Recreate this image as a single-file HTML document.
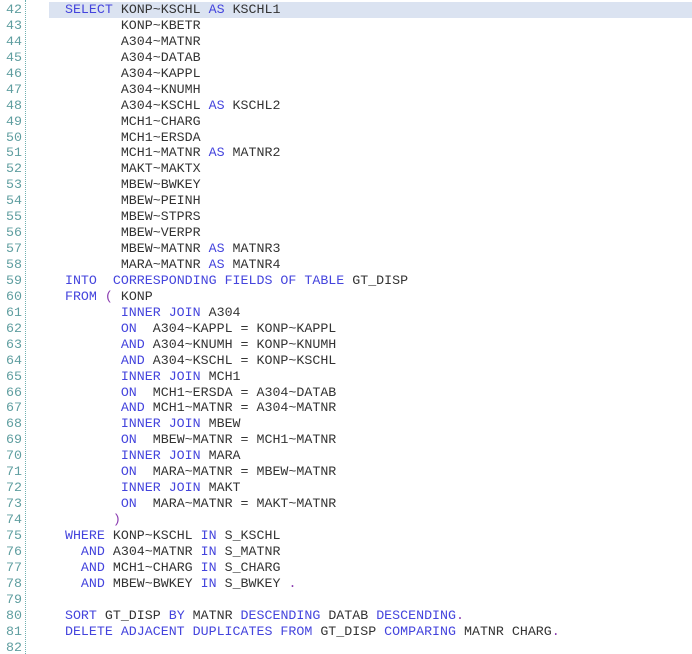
<!DOCTYPE html>
<html><head><meta charset="utf-8"><style>
html,body{margin:0;padding:0;background:#fff;width:692px;height:654px;overflow:hidden}
.wrap{position:relative;padding-top:2px}
.l{position:relative;height:15.95px;line-height:15.95px;font-family:"Liberation Mono",monospace;font-size:13.3px;white-space:pre;color:#333}
.n{position:absolute;left:6px;width:18px;color:#5f9ea0;}
.c{position:absolute;left:49px;}
.hl{position:absolute;left:49px;right:0;top:0;height:16px;background:#dbe3f1}
.k{color:#4444dd}
.p{color:#8a3bb0}
.g{position:absolute;left:25px;top:0;height:654px;border-left:1px dotted #6fb0b0}
</style></head><body><div class="g"></div><div class="wrap">
<div class="l"><div class="hl"></div><span class="n">42</span><span class="c">  <span class="k">SELECT</span> KONP~KSCHL <span class="k">AS</span> KSCHL1</span></div>
<div class="l"><span class="n">43</span><span class="c">         KONP~KBETR</span></div>
<div class="l"><span class="n">44</span><span class="c">         A304~MATNR</span></div>
<div class="l"><span class="n">45</span><span class="c">         A304~DATAB</span></div>
<div class="l"><span class="n">46</span><span class="c">         A304~KAPPL</span></div>
<div class="l"><span class="n">47</span><span class="c">         A304~KNUMH</span></div>
<div class="l"><span class="n">48</span><span class="c">         A304~KSCHL <span class="k">AS</span> KSCHL2</span></div>
<div class="l"><span class="n">49</span><span class="c">         MCH1~CHARG</span></div>
<div class="l"><span class="n">50</span><span class="c">         MCH1~ERSDA</span></div>
<div class="l"><span class="n">51</span><span class="c">         MCH1~MATNR <span class="k">AS</span> MATNR2</span></div>
<div class="l"><span class="n">52</span><span class="c">         MAKT~MAKTX</span></div>
<div class="l"><span class="n">53</span><span class="c">         MBEW~BWKEY</span></div>
<div class="l"><span class="n">54</span><span class="c">         MBEW~PEINH</span></div>
<div class="l"><span class="n">55</span><span class="c">         MBEW~STPRS</span></div>
<div class="l"><span class="n">56</span><span class="c">         MBEW~VERPR</span></div>
<div class="l"><span class="n">57</span><span class="c">         MBEW~MATNR <span class="k">AS</span> MATNR3</span></div>
<div class="l"><span class="n">58</span><span class="c">         MARA~MATNR <span class="k">AS</span> MATNR4</span></div>
<div class="l"><span class="n">59</span><span class="c">  <span class="k">INTO</span>  <span class="k">CORRESPONDING FIELDS OF TABLE</span> GT_DISP</span></div>
<div class="l"><span class="n">60</span><span class="c">  <span class="k">FROM</span> <span class="p">(</span> KONP</span></div>
<div class="l"><span class="n">61</span><span class="c">         <span class="k">INNER JOIN</span> A304</span></div>
<div class="l"><span class="n">62</span><span class="c">         <span class="k">ON</span>  A304~KAPPL = KONP~KAPPL</span></div>
<div class="l"><span class="n">63</span><span class="c">         <span class="k">AND</span> A304~KNUMH = KONP~KNUMH</span></div>
<div class="l"><span class="n">64</span><span class="c">         <span class="k">AND</span> A304~KSCHL = KONP~KSCHL</span></div>
<div class="l"><span class="n">65</span><span class="c">         <span class="k">INNER JOIN</span> MCH1</span></div>
<div class="l"><span class="n">66</span><span class="c">         <span class="k">ON</span>  MCH1~ERSDA = A304~DATAB</span></div>
<div class="l"><span class="n">67</span><span class="c">         <span class="k">AND</span> MCH1~MATNR = A304~MATNR</span></div>
<div class="l"><span class="n">68</span><span class="c">         <span class="k">INNER JOIN</span> MBEW</span></div>
<div class="l"><span class="n">69</span><span class="c">         <span class="k">ON</span>  MBEW~MATNR = MCH1~MATNR</span></div>
<div class="l"><span class="n">70</span><span class="c">         <span class="k">INNER JOIN</span> MARA</span></div>
<div class="l"><span class="n">71</span><span class="c">         <span class="k">ON</span>  MARA~MATNR = MBEW~MATNR</span></div>
<div class="l"><span class="n">72</span><span class="c">         <span class="k">INNER JOIN</span> MAKT</span></div>
<div class="l"><span class="n">73</span><span class="c">         <span class="k">ON</span>  MARA~MATNR = MAKT~MATNR</span></div>
<div class="l"><span class="n">74</span><span class="c">        <span class="p">)</span></span></div>
<div class="l"><span class="n">75</span><span class="c">  <span class="k">WHERE</span> KONP~KSCHL <span class="k">IN</span> S_KSCHL</span></div>
<div class="l"><span class="n">76</span><span class="c">    <span class="k">AND</span> A304~MATNR <span class="k">IN</span> S_MATNR</span></div>
<div class="l"><span class="n">77</span><span class="c">    <span class="k">AND</span> MCH1~CHARG <span class="k">IN</span> S_CHARG</span></div>
<div class="l"><span class="n">78</span><span class="c">    <span class="k">AND</span> MBEW~BWKEY <span class="k">IN</span> S_BWKEY <span class="p">.</span></span></div>
<div class="l"><span class="n">79</span><span class="c"></span></div>
<div class="l"><span class="n">80</span><span class="c">  <span class="k">SORT</span> GT_DISP <span class="k">BY</span> MATNR <span class="k">DESCENDING</span> DATAB <span class="k">DESCENDING</span><span class="p">.</span></span></div>
<div class="l"><span class="n">81</span><span class="c">  <span class="k">DELETE ADJACENT DUPLICATES FROM</span> GT_DISP <span class="k">COMPARING</span> MATNR CHARG<span class="p">.</span></span></div>
<div class="l"><span class="n">82</span><span class="c"></span></div>
</div></body></html>
